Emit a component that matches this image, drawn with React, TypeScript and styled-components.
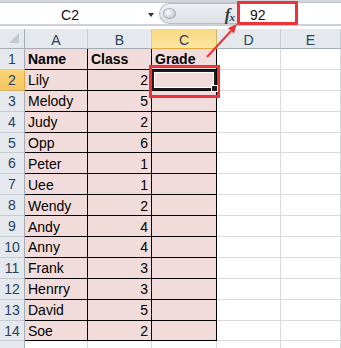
import React from 'react';
import styled, { createGlobalStyle, css } from 'styled-components';

const GlobalStyle = createGlobalStyle`
  body {
    margin: 0;
    background: #fff;
    font-family: 'Liberation Sans', Arial, sans-serif;
  }
`;

const rows: [string, number][] = [
  ['Lily', 2],
  ['Melody', 5],
  ['Judy', 2],
  ['Opp', 6],
  ['Peter', 1],
  ['Uee', 1],
  ['Wendy', 2],
  ['Andy', 4],
  ['Anny', 4],
  ['Frank', 3],
  ['Henrry', 3],
  ['David', 5],
  ['Soe', 2],
];

const columns = ['A', 'B', 'C', 'D', 'E'];

export default function App() {
  return (
    <Window>
      <GlobalStyle />
      <RibbonEdge />
      <FormulaBar>
        <NameBox>C2</NameBox>
        <DropArrow />
        <Pill>
          <Knob />
          <Fx>
            <i>f</i>
            <sub>x</sub>
          </Fx>
        </Pill>
        <FormulaInput>92</FormulaInput>
      </FormulaBar>
      <BarGap />
      <Sheet>
        <Corner>
          <CornerMark />
        </Corner>
        {columns.map((c) => (
          <ColHeader key={c} $active={c === 'C'}>
            {c}
          </ColHeader>
        ))}

        <RowHeader $active={false}>1</RowHeader>
        <Cell $kind="data" $bold>Name</Cell>
        <Cell $kind="data" $bold>Class</Cell>
        <Cell $kind="data" $bold>Grade</Cell>
        <Cell $kind="plain" />
        <Cell $kind="plain" />

        {rows.map(([name, cls], i) => (
          <React.Fragment key={name}>
            <RowHeader $active={i === 0}>{i + 2}</RowHeader>
            <Cell $kind="data">{name}</Cell>
            <Cell $kind="data" $right>
              {cls}
            </Cell>
            <Cell $kind="data" $selected={i === 0}>
              {i === 0 && <FillHandle />}
            </Cell>
            <Cell $kind="plain" />
            <Cell $kind="plain" />
          </React.Fragment>
        ))}

        {/* row 15 is only a sliver at the bottom edge */}
        <RowHeader $active={false} />
        <Cell $kind="plain" />
        <Cell $kind="plain" />
        <Cell $kind="plain" />
        <Cell $kind="plain" />
        <Cell $kind="plain" />
      </Sheet>

      <Callout style={{ left: 237, top: 1, width: 61, height: 24 }} />
      <Callout style={{ left: 149, top: 65, width: 71, height: 33 }} />
      <Arrow viewBox="0 0 341 348" width="341" height="348">
        <line x1="207" y1="57" x2="231" y2="31" stroke="#ee3338" strokeWidth="2" />
        <polygon points="237,24 233.9,33.4 227.9,28" fill="#ee3338" />
      </Arrow>
    </Window>
  );
}

const Window = styled.div`
  position: relative;
  width: 341px;
  height: 348px;
  overflow: hidden;
  background: #fff;
`;

const RibbonEdge = styled.div`
  height: 2px;
  background: #d3d7dc;
  border-bottom: 1px solid #bfc4ca;
`;

const FormulaBar = styled.div`
  display: flex;
  align-items: stretch;
  height: 21px;
  background: #fff;
  border-bottom: 2px solid #cdd1d6;
  font-size: 14px;
  color: #111;
`;

const NameBox = styled.div`
  width: 140px;
  display: flex;
  align-items: center;
  justify-content: center;
  padding-top: 2px;
`;

const DropArrow = styled.div`
  width: 19px;
  position: relative;
  &::after {
    content: '';
    position: absolute;
    left: 8px;
    top: 10px;
    border-left: 3.5px solid transparent;
    border-right: 3.5px solid transparent;
    border-top: 4px solid #333;
  }
`;

const Pill = styled.div`
  width: 78px;
  display: flex;
  align-items: center;
  justify-content: space-between;
  padding: 0 2px 0 3px;
  box-sizing: border-box;
  background: linear-gradient(#eef0f3, #dde1e6);
  border: 1px solid #b9bec5;
  border-right: none;
  border-radius: 11px 0 0 11px;
`;

const Knob = styled.div`
  width: 11px;
  height: 9px;
  border-radius: 50%;
  background: radial-gradient(circle at 40% 35%, #ffffff, #b5bac1);
  border: 1px solid #a9aeb5;
`;

const Fx = styled.div`
  font-family: 'Liberation Serif', 'Times New Roman', serif;
  font-weight: bold;
  font-size: 17px;
  line-height: 1;
  color: #3a3a3a;
  padding-top: 1px;
  i {
    font-style: italic;
  }
  sub {
    font-size: 11px;
    font-style: italic;
    vertical-align: -1px;
    margin-left: -1px;
  }
`;

const FormulaInput = styled.div`
  flex: 1;
  display: flex;
  align-items: center;
  padding: 2px 0 0 13px;
`;

const BarGap = styled.div`
  height: 3px;
  background: #fff;
`;

const Sheet = styled.div`
  display: grid;
  grid-template-columns: 25px 63px 64px 65px 64px 60px;
  grid-template-rows: 20px repeat(15, 20.9px);
  font-size: 14px;
`;

const headerBase = css`
  box-sizing: border-box;
  display: flex;
  align-items: center;
  justify-content: center;
  color: #27415f;
  background: #e5e8ec;
`;

const Corner = styled.div`
  ${headerBase};
  position: relative;
  border-right: 1px solid #a4acb6;
  border-bottom: 1px solid #a4acb6;
`;

const CornerMark = styled.div`
  position: absolute;
  right: 5px;
  bottom: 5px;
  width: 0;
  height: 0;
  border-left: 10px solid transparent;
  border-bottom: 10px solid #c5cad0;
`;

const ColHeader = styled.div<{ $active: boolean }>`
  ${headerBase};
  padding-top: 2px;
  border-right: 1px solid #c6cbd2;
  border-bottom: 1px solid #a4acb6;
  ${(p) =>
    p.$active &&
    css`
      background: linear-gradient(#f8d982, #fde6a2);
      border-bottom-color: #e8a83e;
      border-right-color: #d9b267;
    `}
`;

const RowHeader = styled.div<{ $active: boolean }>`
  ${headerBase};
  border-right: 1px solid #a4acb6;
  border-bottom: 1px solid #c6cbd2;
  ${(p) =>
    p.$active &&
    css`
      background: linear-gradient(#f9d57c, #f6c55f);
      border-right-color: #e8a83e;
      border-bottom-color: #d9b267;
    `}
`;

const Cell = styled.div<{
  $kind: 'data' | 'plain';
  $bold?: boolean;
  $right?: boolean;
  $selected?: boolean;
}>`
  position: relative;
  box-sizing: border-box;
  display: flex;
  align-items: center;
  justify-content: ${(p) => (p.$right ? 'flex-end' : 'flex-start')};
  padding: 1px 3px 0 3px;
  font-weight: ${(p) => (p.$bold ? 'bold' : 'normal')};
  color: #000;
  white-space: nowrap;
  ${(p) =>
    p.$kind === 'data'
      ? css`
          background: #f2dcdb;
          border-right: 1px solid #000;
          border-bottom: 1px solid #000;
        `
      : css`
          background: #fff;
          border-right: 1px solid #d9dadb;
          border-bottom: 1px solid #d9dadb;
        `}
  ${(p) =>
    p.$selected &&
    css`
      box-shadow: inset 0 0 0 2px #1c1c1c, inset 0 0 0 3px #fff;
    `}
`;

const FillHandle = styled.div`
  position: absolute;
  right: -2px;
  bottom: -2px;
  width: 5px;
  height: 5px;
  background: #1c1c1c;
  border: 1px solid #fff;
  z-index: 1;
`;

const Callout = styled.div`
  position: absolute;
  box-sizing: border-box;
  border: 3px solid #ee3338;
  pointer-events: none;
`;

const Arrow = styled.svg`
  position: absolute;
  left: 0;
  top: 0;
  pointer-events: none;
`;
